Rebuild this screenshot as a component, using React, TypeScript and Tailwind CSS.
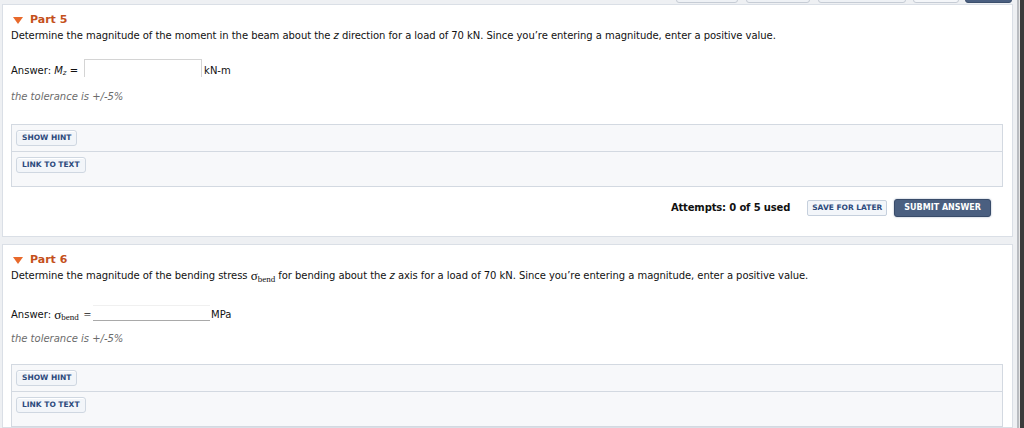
import React from "react";

const font = { fontFamily: '"DejaVu Sans", Verdana, sans-serif' };

function Btn({ children }: { children: React.ReactNode }) {
  return (
    <div className="h-[16px] px-[5px] flex items-center rounded-[3px] border border-[#cfd7e1] bg-[#f2f5f9] text-[7.5px] font-bold text-[#2c4a7c] leading-none shadow-[inset_0_1px_0_#ffffff]">
      {children}
    </div>
  );
}

function HintBox() {
  return (
    <div className="ml-[8px] w-[992px] border border-[#d3d9e1] bg-[#f7f8fa]">
      <div className="h-[27px] flex items-center pl-[4px] border-b border-[#d3d9e1]">
        <Btn>SHOW HINT</Btn>
      </div>
      <div className="h-[34px] pt-[5px] pl-[4px] flex items-start">
        <Btn>LINK TO TEXT</Btn>
      </div>
    </div>
  );
}

function PartHead({ n }: { n: number }) {
  return (
    <div className="mt-[9px] h-[12px] flex items-center">
      <svg width="10" height="7" viewBox="0 0 10 7" className="ml-[2px]">
        <polygon points="0,0 10,0 5,7" fill="#e8692b" />
      </svg>
      <span className="ml-[7px] text-[11px] font-bold text-[#c4501c] leading-[12px]">Part {n}</span>
    </div>
  );
}

export default function App() {
  return (
    <div className="w-[1024px] h-[428px] overflow-hidden bg-[#eef0f3] flex text-[#111]" style={font}>
      <div className="w-[1017px] flex flex-col">
        {/* top strip with button bottoms */}
        <div className="h-[4px] relative shrink-0">
          <div className="absolute left-[676px] top-[-10px] w-[62px] h-[13px] rounded-[3px] border border-[#c6ccd5] bg-[#eef1f5]" />
          <div className="absolute left-[746px] top-[-10px] w-[64px] h-[13px] rounded-[3px] border border-[#c6ccd5] bg-[#eef1f5]" />
          <div className="absolute left-[818px] top-[-10px] w-[88px] h-[13px] rounded-[3px] border border-[#c6ccd5] bg-[#eef1f5]" />
          <div className="absolute left-[913px] top-[-10px] w-[46px] h-[13px] rounded-[3px] border border-[#c6ccd5] bg-[#f4f6f9]" />
          <div className="absolute left-[965px] top-[-10px] w-[47px] h-[13px] rounded-[3px] border border-[#3c4f6c] bg-[#4a5f80]" />
        </div>

        {/* Part 5 panel */}
        <div className="ml-[2px] w-[1011px] h-[233px] shrink-0 border border-[#dadfe6] bg-white pl-[8px] flex flex-col">
          <PartHead n={5} />
          <div className="mt-[4px] h-[12px] text-[10px] leading-[12px] whitespace-nowrap tracking-[-0.05px]">
            Determine the magnitude of the moment in the beam about the <i>z</i> direction for a load of 70 kN. Since you’re entering a magnitude, enter a positive value.
          </div>
          <div className="mt-[17px] h-[18px] flex items-end text-[10px] leading-[12px]">
            <span className="whitespace-nowrap">
              Answer: <i>M</i>
              <sub className="text-[7px] italic relative top-[1px]">z</sub> =
            </span>
            <div className="ml-[6px] w-[118px] h-[18px] border-t border-l border-r border-[#d4d4d4]" />
            <span className="ml-[2px]">kN-m</span>
          </div>
          <div className="mt-[14px] h-[12px] text-[10px] leading-[12px] italic text-[#6b6b6b]">the tolerance is +/-5%</div>
          <div className="mt-[21px] -ml-[8px]">
            <HintBox />
          </div>
          <div className="mt-[12px] h-[18px] flex items-center justify-end pr-[21px]">
            <span className="text-[10px] font-bold leading-[12px] whitespace-nowrap tracking-[-0.15px]">Attempts: 0 of 5 used</span>
            <div className="ml-[17px] h-[16px] px-[4px] flex items-center rounded-[2px] border border-[#c6d0dd] bg-[#f3f6fa] text-[7.5px] font-bold text-[#2c4a7c] leading-none">
              SAVE FOR LATER
            </div>
            <div className="ml-[7px] h-[18px] px-[9px] flex items-center rounded-[3px] border border-[#384b69] bg-[#4a5f80] text-[8px] font-bold text-white leading-none shadow-[0_0_2px_#9aa8bd]">
              SUBMIT ANSWER
            </div>
          </div>
        </div>

        {/* Part 6 panel */}
        <div className="mt-[7px] ml-[2px] w-[1011px] flex-1 border border-[#dadfe6] bg-white pl-[8px] flex flex-col">
          <PartHead n={6} />
          <div className="mt-[4px] h-[12px] text-[10px] leading-[12px] whitespace-nowrap flex items-center tracking-[-0.05px]">
            <span>Determine the magnitude of the bending stress&nbsp;</span>
            <span style={{ fontFamily: '"Liberation Serif", "DejaVu Serif", serif' }} className="text-[13px] leading-[12px] tracking-normal">
              σ<sub className="text-[9px] relative top-[2px]">bend</sub>
            </span>
            <span>&nbsp;for bending about the <i>z</i> axis for a load of 70 kN. Since you’re entering a magnitude, enter a positive value.</span>
          </div>
          <div className="mt-[23px] h-[16px] flex items-end text-[10px] leading-[12px]">
            <span className="whitespace-nowrap">Answer:&nbsp;</span>
            <span style={{ fontFamily: '"Liberation Serif", "DejaVu Serif", serif' }} className="text-[13px] leading-[12px] whitespace-nowrap">
              σ<sub className="text-[9px] relative top-[1px]">bend</sub>
              <span className="ml-[5px]">=</span>
            </span>
            <div className="ml-[2px] w-[117px] h-[16px] border-t border-b border-t-[#f0f0f0] border-b-[#a9a9a9]" />
            <span className="ml-[1px]">MPa</span>
          </div>
          <div className="mt-[12px] h-[12px] text-[10px] leading-[12px] italic text-[#6b6b6b]">the tolerance is +/-5%</div>
          <div className="mt-[19px] -ml-[8px]">
            <HintBox />
          </div>
        </div>
      </div>
      {/* scrollbar edge */}
      <div className="w-[2px] bg-[#b9bcc1]" />
      <div className="w-[1px] bg-[#e6e6e6]" />
      <div className="w-[4px] bg-[#3b3b3b]" />
    </div>
  );
}
